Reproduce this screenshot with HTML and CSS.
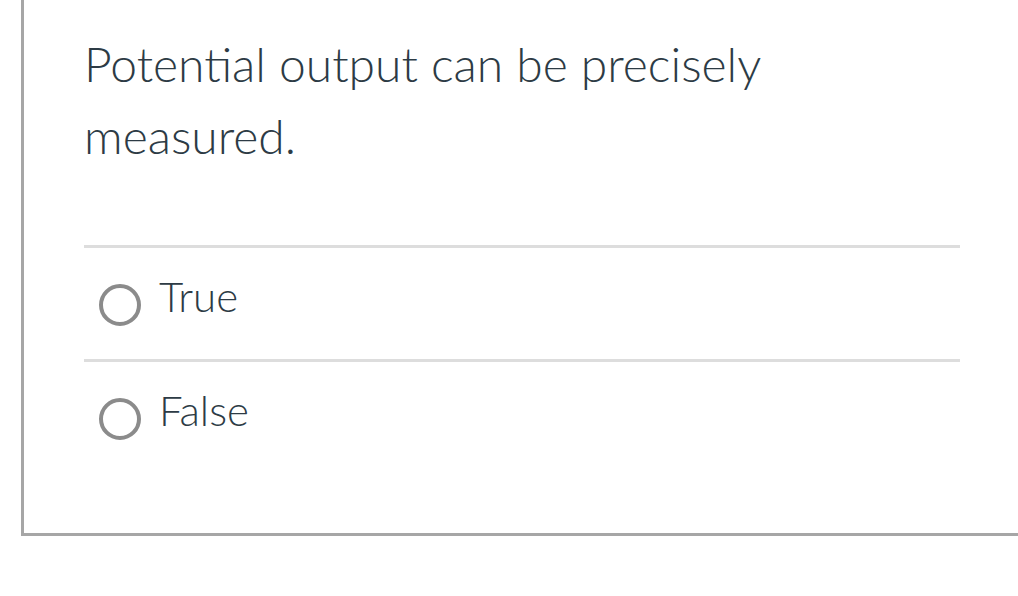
FILE: index.html
```html
<!doctype html>
<html>
<head>
	<meta charset="utf-8">
	<title>Question</title>
	<link rel="stylesheet" href="styles.css">
</head>
<body>
	<div class="question">
		<p class="question-text">Potential output can be precisely measured.</p>
		<div class="answers">
			<label class="answer">
				<span class="radio"></span>
				<span class="answer-label">True</span>
			</label>
			<label class="answer">
				<span class="radio"></span>
				<span class="answer-label">False</span>
			</label>
		</div>
	</div>
</body>
</html>
```

FILE: styles.css
```css
html, body {
	margin: 0;
	padding: 0;
	background: #fff;
	overflow: hidden;
}
body {
	font-family: Lato, "Liberation Sans", sans-serif;
	color: #2d3b45;
}
.question {
	width: 876px;
	margin-left: 21px;
	padding: 28px 58px 60px 60px;
	border-left: 3px solid #a6a6a6;
	border-bottom: 3px solid #a6a6a6;
}
.question-text {
	margin: 0;
	width: 700px;
	font-size: 48px;
	font-weight: 300;
	line-height: 72px;
}
.answers {
	margin-top: 73px;
}
.answer {
	display: flex;
	align-items: flex-start;
	gap: 18px;
	height: 111px;
	padding-left: 15px;
	border-top: 3px solid #dddddd;
}
.radio {
	width: 34px;
	height: 34px;
	margin-top: 36px;
	border: 4px solid #8b8b8b;
	border-radius: 50%;
	flex: none;
}
.answer-label {
	margin-top: 23px;
	font-size: 42px;
	font-weight: 300;
	line-height: 50px;
}
```
